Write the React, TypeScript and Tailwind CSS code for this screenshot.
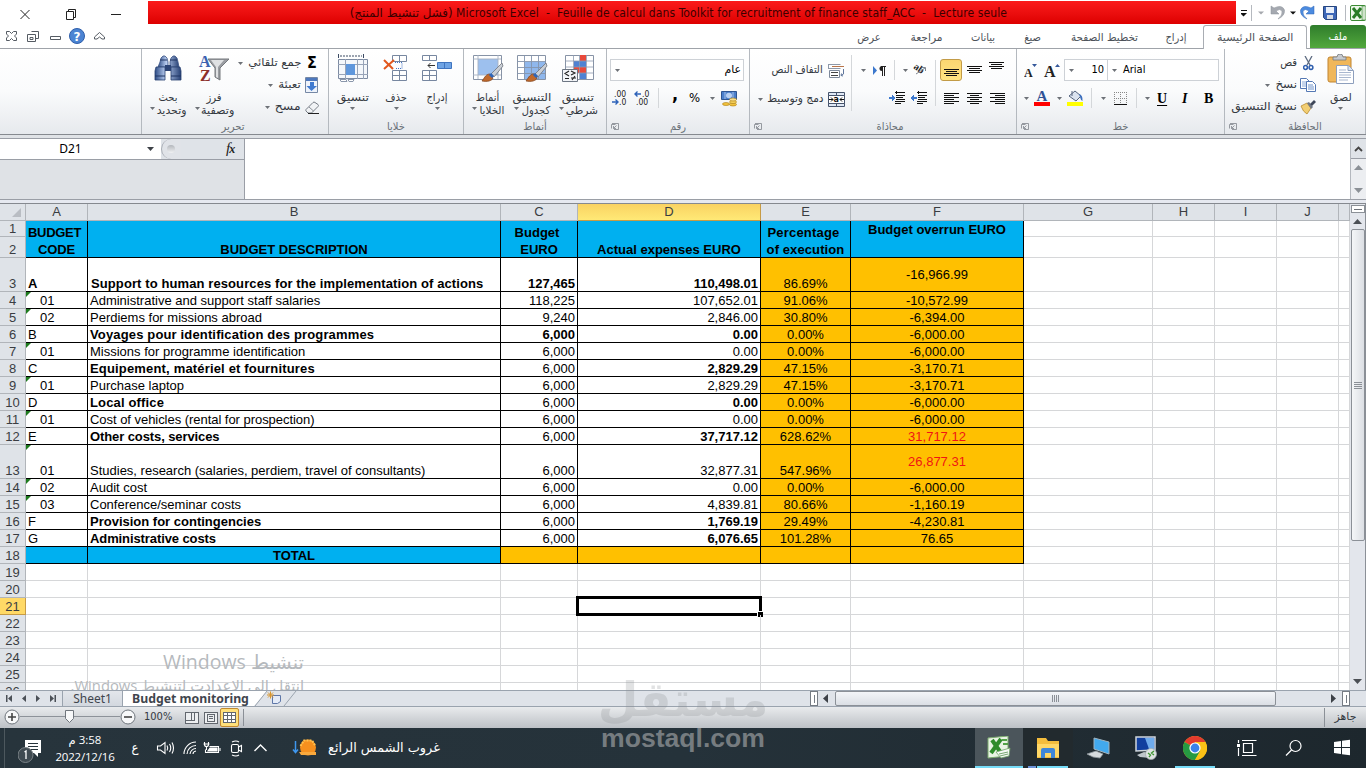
import React from 'react'
import clsx from 'clsx'

type RowData = {
  n: number
  code: string
  desc: string
  budget: string
  actual: string
  pct: string
  over: string
  bold?: boolean
  boldBudget?: boolean
  red?: boolean
  tracking?: string
}

const rows: RowData[] = [
  { n: 3, code: 'A', desc: 'Support to human resources for the implementation of actions', budget: '127,465', actual: '110,498.01', pct: '86.69%', over: '-16,966.99', bold: true, boldBudget: true, tracking: 'tracking-[0.1px]' },
  { n: 4, code: '01', desc: 'Administrative and support staff salaries', budget: '118,225', actual: '107,652.01', pct: '91.06%', over: '-10,572.99' },
  { n: 5, code: '02', desc: 'Perdiems for missions abroad', budget: '9,240', actual: '2,846.00', pct: '30.80%', over: '-6,394.00' },
  { n: 6, code: 'B', desc: 'Voyages pour identification des programmes', budget: '6,000', actual: '0.00', pct: '0.00%', over: '-6,000.00', bold: true, boldBudget: true, tracking: 'tracking-[0.15px]' },
  { n: 7, code: '01', desc: 'Missions for programme identification', budget: '6,000', actual: '0.00', pct: '0.00%', over: '-6,000.00' },
  { n: 8, code: 'C', desc: 'Equipement, matériel et fournitures', budget: '6,000', actual: '2,829.29', pct: '47.15%', over: '-3,170.71', bold: true, tracking: 'tracking-[0.17px]' },
  { n: 9, code: '01', desc: 'Purchase laptop', budget: '6,000', actual: '2,829.29', pct: '47.15%', over: '-3,170.71' },
  { n: 10, code: 'D', desc: 'Local office', budget: '6,000', actual: '0.00', pct: '0.00%', over: '-6,000.00', bold: true, tracking: 'tracking-[0.15px]' },
  { n: 11, code: '01', desc: 'Cost of vehicles (rental for prospection)', budget: '6,000', actual: '0.00', pct: '0.00%', over: '-6,000.00', tracking: 'tracking-[-0.04px]' },
  { n: 12, code: 'E', desc: 'Other costs, services', budget: '6,000', actual: '37,717.12', pct: '628.62%', over: '31,717.12', bold: true, red: true, tracking: 'tracking-[-0.1px]' },
  { n: 13, code: '01', desc: 'Studies, research (salaries, perdiem, travel of consultants)', budget: '6,000', actual: '32,877.31', pct: '547.96%', over: '26,877.31', red: true },
  { n: 14, code: '02', desc: 'Audit cost', budget: '6,000', actual: '0.00', pct: '0.00%', over: '-6,000.00' },
  { n: 15, code: '03', desc: 'Conference/seminar costs', budget: '6,000', actual: '4,839.81', pct: '80.66%', over: '-1,160.19' },
  { n: 16, code: 'F', desc: 'Provision for contingencies', budget: '6,000', actual: '1,769.19', pct: '29.49%', over: '-4,230.81', bold: true },
  { n: 17, code: 'G', desc: 'Administrative costs', budget: '6,000', actual: '6,076.65', pct: '101.28%', over: '76.65', bold: true, tracking: 'tracking-[-0.1px]' },
]

const columns = ['A', 'B', 'C', 'D', 'E', 'F', 'G', 'H', 'I', 'J', '']

const emptyRows = [19, 20, 21, 22, 23, 24, 25, 26]

/* ---------- small shared bits ---------- */

const Arrow = ({ className = '' }: { className?: string }) => (
  <svg className={clsx('shrink-0', className)} width="5" height="3" viewBox="0 0 5 3">
    <path d="M0 0h5L2.5 3z" fill="#6d7177" />
  </svg>
)

const Sep = ({ className = '' }: { className?: string }) => (
  <div className={clsx('w-px shrink-0 bg-[#d4d7da]', className)} />
)

const Launcher = () => (
  <svg className="absolute bottom-[4px] left-[4px]" width="8" height="7" viewBox="0 0 8 7" fill="none" stroke="#8b9096">
    <path d="M1 .5h6.500v6M7.500 6.500H3M4.500 1.500h-4v4M5.500 2.500l-3 3M2.500 3v2.500h2.500" strokeWidth=".9" />
  </svg>
)

const Lines = ({ widths, y = 0 }: { widths: number[][]; y?: number }) => (
  <svg className="shrink-0" width="15" height="16" viewBox="0 0 15 16" stroke="#111" strokeWidth="1" shapeRendering="crispEdges">
    {widths.map(([x1, x2], i) => (
      <path key={i} d={`M${x1} ${y + i * 2 + 0.5}H${x2}`} />
    ))}
  </svg>
)

type GroupProps = { width: string; label: string; launcher?: boolean; labelPad?: string; children: React.ReactNode }

const Group = ({ width, label, launcher, labelPad = '', children }: GroupProps) => (
  <div className={clsx('relative flex h-[85px] shrink-0 flex-col border-r border-[#b4b9bf]', width)}>
    <div className="flex h-[70px]">{children}</div>
    <div className={clsx('h-[15px] text-center text-[11px] leading-[15px] text-[#6a7178]', labelPad)} dir="rtl">{label}</div>
    {launcher && <Launcher />}
  </div>
)

type BigProps = { width: string; icon: React.ReactNode; line1: string; line2?: string; class1?: string; class2?: string }

const BigButton = ({ width, icon, line1, line2, class1 = '', class2 = '' }: BigProps) => (
  <div className={clsx('flex shrink-0 flex-col items-center pt-[5px]', width)}>
    <div className="h-[37px]">{icon}</div>
    <div className={clsx('h-[13px] whitespace-nowrap text-[11px] leading-[13px]', class1)} dir="rtl">{line1}</div>
    {line2 ? (
      <div className="flex h-[13px] items-center gap-[3px] whitespace-nowrap text-[11px] leading-[13px]">
        <Arrow className="-mt-1" />
        <span className={class2} dir="rtl">{line2}</span>
      </div>
    ) : (
      <Arrow className="mt-[3px]" />
    )}
  </div>
)

type SmallProps = { text: string; icon: React.ReactNode; arrow?: boolean; textClass?: string }

const SmallButton = ({ text, icon, arrow, textClass = '' }: SmallProps) => (
  <div className="flex h-[22px] items-center justify-end">
    {arrow && <Arrow className="mr-[5px]" />}
    <span className={clsx('origin-right whitespace-nowrap text-[11px]', textClass)} dir="rtl">{text}</span>
    <span className="ml-[3px] flex w-4 justify-center">{icon}</span>
  </div>
)

/* ---------- ribbon icons ---------- */

const Binoculars = () => (
  <svg width="28" height="28" viewBox="0 0 28 28">
    <defs>
      <linearGradient id="bino" x1="0" x2="1">
        <stop offset="0" stopColor="#2d4c86" />
        <stop offset=".4" stopColor="#b9cdf0" />
        <stop offset="1" stopColor="#274175" />
      </linearGradient>
    </defs>
    <path d="M6 8l1-4 2-2h2l2 2 1 4v5H4zM16 8l1-4 2-2h2l2 2 1 4 1 5h-9z" fill="url(#bino)" stroke="#3b5486" strokeWidth=".8" />
    <path d="M2 13h9v13H1V17zM17 13h9l1 4v9H17z" fill="url(#bino)" stroke="#263f70" strokeWidth=".8" />
    <path d="M11 11h6v6h-6z" fill="#2c4476" />
    <path d="M6 6h7M16 6h7M1 22h10M17 22h10" stroke="#1f3562" />
  </svg>
)

const SortFilter = () => (
  <svg width="32" height="32" viewBox="0 0 32 32">
    <path d="M10 5h21l-9 9v12l-5-3V14z" fill="#9a9da2" stroke="#74787d" />
    <path d="M13 6h13l-6 7v11l-2-1V13z" fill="#dfe1e3" />
    <text x="1" y="13" fontFamily="Liberation Serif, serif" fontWeight="700" fontSize="16" fill="#3b62b0">A</text>
    <text x="2" y="27" fontFamily="Liberation Serif, serif" fontWeight="700" fontSize="16" fill="#8c2f2b">Z</text>
  </svg>
)

const FormatCells = () => (
  <svg width="32" height="31" viewBox="0 0 32 31" fill="none">
    <path d="M1.500 0v4M26.500 0v4" stroke="#3b4a63" />
    <path d="M3 2h22" stroke="#3b4a63" strokeDasharray="2 1" />
    <path d="M1.500 5.500h29v19h-29z" fill="#f4f7fb" stroke="#7d8ba2" />
    <path d="M1 10.500h30M1 20.500h30M8.500 5v20M20.500 5v20M26.500 5v20" stroke="#98a4b8" />
    <path d="M9 10h9v11H9z" fill="#5f97dc" />
    <path d="M3 25.500h6l1 2H4zM11 25.500h6l-1 2h-4z" fill="#fff" stroke="#8a97ab" />
  </svg>
)

const DeleteCells = () => (
  <svg width="26" height="30" viewBox="0 0 26 30" fill="none" strokeWidth="1">
    <path d="M9.500 1.500h14v6h-14zM16.500 1.500v6M9.500 16.500h14v10h-14zM16.500 16.500v10M9.500 21.500h14" fill="#fff" stroke="#7787a0" />
    <path d="M12 8.500h7v6h-7" stroke="#4474c4" strokeDasharray="1 1" />
    <path d="M1 6l9 9M11 6L1 15" stroke="#e2571d" strokeWidth="2" />
  </svg>
)

const InsertCells = () => (
  <svg width="32" height="30" viewBox="0 0 32 30" fill="none" strokeWidth="1">
    <path d="M1.500 1.500h14v5h-14zM8.500 1.500v5M1.500 16.500h14v10h-14zM8.500 16.500v10M1.500 21.500h14" fill="#fff" stroke="#7787a0" />
    <path d="M16.500 8.500h14v6h-14z" fill="#6ea3e4" stroke="#3f74bf" />
    <path d="M23.500 8v7" stroke="#3f74bf" />
    <path d="M14 11.500H7M9.500 9L7 11.500 9.500 14" stroke="#333" />
  </svg>
)

const Brush = () => (
  <g>
    <path d="M30 9L19 20l3 3 9-11z" fill="#c9ced5" stroke="#6e747c" strokeWidth=".8" />
    <path d="M18 20c-4 0-5 3-8 7 5 1 10 0 11-3z" fill="#c0692c" stroke="#7c3f18" strokeWidth=".7" />
    <path d="M18 20l3 3" stroke="#2f66b8" strokeWidth="3" />
  </g>
)

const CellStyles = () => (
  <svg width="32" height="30" viewBox="0 0 32 30">
    <path d="M1.500 1.500h28v24h-28z" fill="#fff" stroke="#8793a6" />
    <path d="M6 5h20v16H6z" fill="#9dc0ee" />
    <path d="M6 1v24M1 5h28M1 21h28M26 1v24" stroke="#a6b1c2" strokeWidth=".9" />
    <Brush />
  </svg>
)

const TableStyles = () => (
  <svg width="32" height="30" viewBox="0 0 32 30">
    <path d="M1.500 1.500h28v24h-28z" fill="#fff" stroke="#8793a6" />
    <path d="M8 8h21v17H8z" fill="#8fb7ec" />
    <path d="M8.500 1v24M15.500 1v24M22.500 1v24M1 7.500h28M1 13.500h28M1 19.500h28" stroke="#8494ad" strokeWidth=".9" />
    <Brush />
  </svg>
)

const CondFormat = () => (
  <svg width="32" height="30" viewBox="0 0 32 30">
    <path d="M3.500 1.500h28v24h-28z" fill="#fff" stroke="#8793a6" />
    <path d="M18 1h6v6h-6zM12 13h12v6H12z" fill="#e8493b" />
    <path d="M12 7h12v6H12zM18 19h6v6h-6z" fill="#4f82d3" />
    <path d="M11.500 1v24M17.500 1v24M24.500 1v24M4 7h27M4 13h27M4 19h27" stroke="#8e9bb0" strokeWidth=".8" />
    <path d="M.5 15.500h15v12H.5z" fill="#f3f5f8" stroke="#6d7683" />
    <path d="M7 17l-4 2.500L7 22M3 24.500h4M9 17l4 2-4 2M9 24h5M10 26l3-4" stroke="#222" fill="none" strokeWidth="1.100" />
  </svg>
)

const Fill = () => (
  <svg width="14" height="16" viewBox="0 0 14 16">
    <path d="M.5.500h12v15H.5z" fill="#eef3fb" stroke="#7688a5" />
    <path d="M1 1h11v3H1z" fill="#4d78bd" />
    <path d="M5 5h4v4h3l-5.500 5L1.500 9H5z" fill="#3f7ad0" />
  </svg>
)

const Eraser = () => (
  <svg width="15" height="13" viewBox="0 0 15 13">
    <path d="M1 8.500L8 1.500q1-1 2 0l3 2q1 1 0 2L6.500 12H3L1 10q-.500-1 0-1.500z" fill="#f1f3f5" stroke="#777d86" />
    <path d="M4 6l4.500 4" stroke="#8a9098" />
    <path d="M3 12.500h11" stroke="#222" />
  </svg>
)

const Currency = () => (
  <svg width="17" height="17" viewBox="0 0 17 17">
    <path d="M.5 1.500h15v8H.5z" fill="#4b7fcb" stroke="#2f5592" />
    <ellipse cx="8" cy="5.500" rx="3" ry="2.800" fill="#b9d0f1" />
    <path d="M4 2v7M12 2v7" stroke="#a6c1e9" />
    <ellipse cx="5" cy="14" rx="3.500" ry="1.500" fill="#f2c23c" stroke="#a87b12" strokeWidth=".6" />
    <ellipse cx="12" cy="14.500" rx="3.500" ry="1.500" fill="#f2c23c" stroke="#a87b12" strokeWidth=".6" />
    <ellipse cx="12" cy="12" rx="3.500" ry="1.500" fill="#f7d35f" stroke="#a87b12" strokeWidth=".6" />
    <ellipse cx="12" cy="9.500" rx="3.500" ry="1.500" fill="#fae08a" stroke="#a87b12" strokeWidth=".6" />
  </svg>
)

const Decimals = ({ add }: { add?: boolean }) => (
  <svg width="17" height="16" viewBox="0 0 17 16">
    <text x={add ? 8 : 2} y="7" fontSize="8.500" fontFamily="DejaVu Sans Condensed, sans-serif" fill="#222">{add ? '.0' : '.00'}</text>
    <text x={add ? 2 : 7} y="14.500" fontSize="8.500" fontFamily="DejaVu Sans Condensed, sans-serif" fill="#222">{add ? '.00' : '.0'}</text>
    <path d={add ? 'M7 4H1M3.500 1.500L1 4l2.500 2.500' : 'M0 12h6M3.500 9.500L6 12l-2.500 2.500'} stroke="#2d62b8" fill="none" strokeWidth="1.400" />
  </svg>
)

const WrapText = () => (
  <svg className="shrink-0" width="17" height="16" viewBox="0 0 17 16" fill="none">
    <path d="M.5 1.500h12M.5 5.500h12M.5 1v5" stroke="#8d98a8" />
    <path d="M1.500 7.500h10v7h-10z" stroke="#7d899b" fill="#fff" />
    <path d="M3 9.500h7M3 12.500h7" stroke="#444" />
    <path d="M4 3.500h12" stroke="#b8754a" />
    <path d="M15.500 6v5l-2.500 1.500M15 13l-2-.5.5-2" stroke="#60779d" />
  </svg>
)

const Merge = () => (
  <svg className="shrink-0" width="17" height="15" viewBox="0 0 17 15" fill="none">
    <path d="M.5.500h16v14H.5z" fill="#dfe8f5" stroke="#45536b" />
    <path d="M8.500 0v4M8.500 11v4" stroke="#45536b" />
    <path d="M.5 3.500h16v8H.5z" stroke="#45536b" fill="#fff" />
    <path d="M1 7.500h4M3 5.500l2 2-2 2M16 7.500h-4M14 5.500l-2 2 2 2" stroke="#111" />
    <text x="5.600" y="10" fontSize="8" fontWeight="700" fontFamily="DejaVu Sans, sans-serif" fill="#111">a</text>
  </svg>
)

const Indent = ({ right }: { right?: boolean }) => (
  <svg width="16" height="14" viewBox="0 0 16 14" shapeRendering="crispEdges">
    <path d="M6 1.500h10M8 4.500h8M8 6.500h6M8 8.500h8M6 10.500h10M6 12.500h6" stroke="#111" />
    <path d="M7.500 0v14" stroke="#111" strokeDasharray="1 1" />
    <path d={right ? 'M0 6h3V3.500L6 7l-3 3.500V8H0z' : 'M6 6H3V3.500L0 7l3 3.500V8h3z'} fill="#3c78cd" />
  </svg>
)

const Paste = () => (
  <svg width="28" height="31" viewBox="0 0 28 31">
    <rect x="1" y="3" width="23" height="25" rx="2" fill="#f0b75a" stroke="#c08431" />
    <path d="M6 5V3h4q0-3 3-3t3 3h3v3H6z" fill="#c5c9ce" stroke="#74787d" strokeWidth=".8" />
    <path d="M9.500 11.500h12l5 5v13h-17z" fill="#fff" stroke="#8d9fbd" />
    <path d="M12 16h7M12 18.500h12M12 21h12M12 23.500h12M12 26h9" stroke="#a9b7cf" />
    <path d="M21 11.500v5h5" fill="#dbe5f4" stroke="#8d9fbd" />
  </svg>
)

const Scissors = () => (
  <svg width="11" height="15" viewBox="0 0 11 15" fill="none">
    <path d="M2 0l5 9M9 0L4 9" stroke="#5d6b80" strokeWidth="1.300" />
    <circle cx="2.500" cy="11.500" r="1.900" stroke="#2f5fae" strokeWidth="1.500" />
    <circle cx="8" cy="11.500" r="1.900" stroke="#2f5fae" strokeWidth="1.500" />
  </svg>
)

const Copy = () => (
  <svg width="16" height="14" viewBox="0 0 16 14">
    <path d="M.5.500h6l3 3v7h-9z" fill="#fff" stroke="#5478b4" />
    <path d="M2 4h5M2 6h5M2 8h4" stroke="#8dabd9" />
    <path d="M6.500 3.500h6l3 3v7h-9z" fill="#fff" stroke="#5478b4" />
    <path d="M8 7h5M8 9h6M8 11h6" stroke="#6f93cb" />
  </svg>
)

const FormatPainter = () => (
  <svg width="16" height="15" viewBox="0 0 16 15">
    <path d="M1 6l6-3 4 5-4 6Q3 12 1 6z" fill="#f2ce72" stroke="#b98c31" strokeWidth=".8" />
    <path d="M7 3l2-1 4 5-2 2z" fill="#717781" />
    <path d="M10 4l4-4 2 2-4 4z" fill="#3d4658" />
  </svg>
)

const Bucket = () => (
  <svg width="17" height="17" viewBox="0 0 17 17">
    <path d="M2 6l6-5 6 5-5 5z" fill="#dbe3ef" stroke="#56657f" />
    <path d="M5 1v5" stroke="#56657f" />
    <path d="M12 4q4 1 3.500 7-2-1-2.500-4z" fill="#3d6fbd" />
    <path d="M0 12h16v4H0z" fill="#ffff00" />
  </svg>
)

/* ---------- window chrome ---------- */

const TitleBar = () => (
  <div className="flex h-[25px] bg-white pt-px">
    <div className="flex w-[148px] items-start pl-[20px] pt-[8px]">
      <svg width="102" height="12" viewBox="0 0 102 12" fill="none" stroke="#222">
        <path d="M.5 1l9 9M9.500 1l-9 9" />
        <path d="M46.500 2.500h7v8h-7zM48.500 2.500v-2h7v8h-2" />
        <path d="M91 5.500h10" />
      </svg>
    </div>
    <div className="flex h-[23px] w-[1088px] items-center justify-center bg-gradient-to-b from-[#fb1a1a] to-[#dd0000]">
      <div className="mr-[18px] flex whitespace-pre font-['DejaVu_Sans_Condensed',sans-serif] text-[12px] text-[#3c0000]">
        <span className="origin-right scale-x-[1.1]" dir="rtl">(فشل تنشيط المنتج)</span>
        <span className="tracking-[0.11px]"> Microsoft Excel  -  Feuille de calcul dans Toolkit for recruitment of finance staff_ACC  -  Lecture seule</span>
      </div>
    </div>
    <div className="flex flex-1 items-center gap-[5px] pl-[5px]">
      <svg width="125" height="20" viewBox="0 0 125 20" fill="none">
        <path d="M-1 7.500h7" stroke="#111" />
        <path d="M-1 10h7l-3.500 3.500z" fill="#111" />
        <path d="M10.500 2v16M104.500 2v16" stroke="#b5b9bf" />
        <path d="M17 8.500h6l-3 3z" fill="#a5a8ad" />
        <path d="M30 3v8h8l-3-3q4-3 6 0 1 4-4 8 7-3 6.500-9-2.500-6-10.500-2z" fill="#a5a9b0" stroke="#8b9098" strokeWidth=".5" />
        <path d="M49 8.500h6l-3 3z" fill="#111" />
        <path d="M73 3v8h-8l3-3q-4-3-6 0-1 4 4 8-7-3-6.500-9 2.500-6 10.500-2z" fill="#4b8be0" stroke="#2b62b4" strokeWidth=".5" />
        <path d="M82.500 3.500h13v13h-11l-2-2z" fill="#3e68b8" stroke="#27467f" />
        <path d="M85 4h8v6h-8z" fill="#e9f0fb" />
        <path d="M86 12h6v4h-6z" fill="#d5dbe5" />
        <rect x="109.500" y="2.500" width="15" height="15" rx="1.500" fill="#edf7ea" stroke="#3b8a33" />
        <path d="M112 5l8 10M120 5l-8 10" stroke="#2a7c26" strokeWidth="3" />
        <path d="M121 3h4v14h-4z" fill="#cfe3ca" stroke="#3b8a33" strokeWidth=".6" />
      </svg>
    </div>
  </div>
)

const TabRow = () => (
  <div className="flex h-[24px] items-end border-b border-[#9fa3a9] bg-white text-[11px] leading-[20px] text-[#4c5259]">
    <svg className="mb-[3px] ml-[5px] shrink-0" width="102" height="17" viewBox="0 0 102 17" fill="none" stroke="#555b63">
      <path d="M1.500 3.500h3l2 2 2-2h3v2.500l-2 2 2 2v2.500h-3l-2-2-2 2h-3v-2.500l2-2-2-2z" />
      <path d="M26.500 3.500h7v7h-3M22.500 6.500h8v7h-8zM25 9.500h3v2h-3z" />
      <path d="M45.500 8.500h10v3h-10z" />
      <circle cx="72" cy="8" r="7.500" fill="#4b84d3" stroke="#2f5eaa" />
      <path d="M89.500 9l5-4.500 5 4.500v2h-2.500L94.500 9l-2.500 2h-2.500z" />
      <text x="72" y="12.500" textAnchor="middle" fontSize="12" fontWeight="700" fill="#fff" stroke="none" fontFamily="DejaVu Sans, sans-serif">?</text>
    </svg>
    <div className="flex-1" />
    <div className="flex whitespace-nowrap text-center">
      <span className="w-[32px]">عرض</span>
      <span className="w-[83px] scale-x-[1.08]">مراجعة</span>
      <span className="w-[30px]">بيانات</span>
      <span className="w-[69px]">صيغ</span>
      <span className="w-[75px] scale-x-[1.05]">تخطيط الصفحة</span>
      <span className="w-[60px] pl-2">إدراج</span>
    </div>
    <div className="relative top-px ml-[1px] h-[24px] w-[104px] rounded-t-[3px] border border-b-0 border-[#a9adb3] bg-white text-center leading-[24px] whitespace-nowrap">
      <span className="inline-block scale-x-[1.12]">الصفحة الرئيسية</span>
    </div>
    <div className="ml-[3px] h-[23px] w-[56px] rounded-t-[3px] bg-gradient-to-b from-[#2f7d2c] to-[#52a83c] text-center leading-[24px] text-white">ملف</div>
  </div>
)

const Ribbon = () => (
  <div className="flex h-[85px] bg-gradient-to-b from-white via-[#fafbfc] to-[#e6e9ed] text-[#33383f]">
    <div className="w-[142px] shrink-0 border-r border-[#b4b9bf]" />

    <Group width="w-[187px]" label="تحرير" labelPad="pr-1">
      <BigButton width="w-[52px]" icon={<Binoculars />} line1="بحث" line2="وتحديد" class2="scale-x-[1.1]" />
      <BigButton width="w-[40px]" icon={<SortFilter />} line1="فرز" line2="وتصفية" class2="scale-x-[1.13]" />
      <div className="flex w-[86px] flex-col pt-[3px]">
        <SmallButton arrow text="جمع تلقائي" textClass="ml-[8px] scale-x-[1.17]" icon={<span className="text-[16px] font-bold leading-none text-black">Σ</span>} />
        <SmallButton arrow text="تعبئة" textClass="ml-[4px] scale-x-[1.2]" icon={<Fill />} />
        <SmallButton arrow text="مسح" textClass="ml-[5px] scale-x-[1.25]" icon={<Eraser />} />
      </div>
    </Group>

    <Group width="w-[135px]" label="خلايا">
      <BigButton width="w-[47px]" icon={<FormatCells />} line1="تنسيق" class1="scale-x-[1.25]" />
      <BigButton width="w-[40px]" icon={<DeleteCells />} line1="حذف" />
      <BigButton width="w-[42px]" icon={<InsertCells />} line1="إدراج" />
    </Group>

    <Group width="w-[143px]" label="أنماط">
      <BigButton width="w-[47px]" icon={<CellStyles />} line1="أنماط" line2="الخلايا" class2="scale-x-[1.05]" />
      <BigButton width="w-[42px]" icon={<TableStyles />} line1="التنسيق" line2="كجدول" class1="scale-x-[1.22]" />
      <BigButton width="w-[50px]" icon={<CondFormat />} line1="تنسيق" line2="شرطي" class1="scale-x-[1.25]" class2="scale-x-[1.08]" />
    </Group>

    <Group width="w-[143px]" label="رقم" launcher labelPad="pl-0 pr-0">
      <div className="flex flex-col pl-[3px] pt-[10px]">
        <div className="flex h-[22px] w-[134px] items-center justify-between border border-[#cdd1d6] bg-white pl-[4px] pr-[2px]">
          <Arrow />
          <span className="origin-right scale-x-[1.1] text-[11px] text-black">عام</span>
        </div>
        <div className="mt-[6px] flex h-[22px] items-center pl-[2px]">
          <Decimals />
          <span className="ml-[5px]"><Decimals add /></span>
          <Sep className="ml-[7px] h-[20px]" />
          <span className="ml-[13px] w-[6px] text-[18px] font-bold leading-none -mt-2 text-black">,</span>
          <span className="ml-[11px] text-[13px] text-black">%</span>
          <Arrow className="ml-[10px]" />
          <span className="ml-[6px]"><Currency /></span>
        </div>
      </div>
    </Group>

    <Group width="w-[267px]" label="محاذاة" launcher labelPad="pl-[14px] pr-0">
      <div className="flex w-[101px] flex-col pt-[10px]">
        <div className="flex h-[23px] items-center justify-end pr-[6px]">
          <span className="mr-[5px] text-[11px] whitespace-nowrap" dir="rtl">التفاف النص</span>
          <WrapText />
        </div>
        <div className="mt-[6px] flex h-[22px] items-center justify-end pr-[6px]">
          <Arrow className="mr-[8px]" />
          <span className="mr-[4px] origin-right scale-x-[1.07] text-[11px] whitespace-nowrap" dir="rtl">دمج وتوسيط</span>
          <Merge />
        </div>
      </div>
      <Sep className="mt-[6px] h-[56px]" />
      <div className="flex w-[84px] flex-col pt-[10px]">
        <div className="flex h-[22px] items-center pl-[9px]">
          <Arrow />
          <svg className="ml-[7px]" width="14" height="11" viewBox="0 0 14 11">
            <path d="M0 1v9l4-4.500z" fill="#3c78cd" />
            <path d="M8 1.500h5M9.500 1v10M11.500 1v10" stroke="#222" />
            <path d="M9 1a2.500 2.500 0 000 5z" fill="#222" />
          </svg>
          <Sep className="ml-[7px] h-[20px]" />
          <Arrow className="ml-[8px]" />
          <svg className="ml-[2px]" width="18" height="18" viewBox="0 0 18 18">
            <text x="3" y="9" fontSize="10" fontWeight="700" fontFamily="Liberation Serif, serif" fill="#222" transform="rotate(35 6 8)">ab</text>
            <path d="M6 13l9-6M12 6.500h3.500V10" stroke="#7d8590" fill="none" />
          </svg>
        </div>
        <div className="mt-[6px] flex h-[22px] items-center gap-[6px] pl-[37px]">
          <Indent right />
          <Indent />
        </div>
      </div>
      <Sep className="mt-[11px] h-[46px]" />
      <div className="flex w-[80px] flex-col pt-[10px]">
        <div className="flex h-[22px] items-center pl-[4px]">
          <div className="flex h-[22px] w-[22px] items-center justify-center rounded-[3px] border border-[#c29b47] bg-gradient-to-b from-[#fbd671] to-[#ffe482]">
            <Lines y={7} widths={[[0, 15], [2, 13], [0, 15], [2, 13]]} />
          </div>
          <span className="ml-[5px]"><Lines y={4} widths={[[0, 15], [2, 13], [0, 15], [2, 13]]} /></span>
          <span className="ml-[7px]"><Lines y={0} widths={[[0, 15], [2, 13], [0, 15], [2, 13]]} /></span>
        </div>
        <div className="mt-[9px] flex h-[22px] items-center gap-[8px] pl-[8px]">
          <Lines y={0} widths={[[0, 15], [0, 10], [0, 15], [0, 10], [0, 15], [0, 10]]} />
          <Lines y={0} widths={[[0, 15], [3, 12], [0, 15], [3, 12], [0, 15], [3, 12]]} />
          <Lines y={0} widths={[[0, 15], [5, 15], [0, 15], [5, 15], [0, 15], [5, 15]]} />
        </div>
      </div>
    </Group>

    <Group width="w-[208px]" label="خط" launcher labelPad="pl-0 pr-0">
      <div className="flex flex-col pl-[7px] pt-[10px]">
        <div className="flex h-[22px] items-center">
          <svg width="36" height="22" viewBox="0 0 36 22">
            <text x="0" y="18" fontSize="12" fontWeight="700" fontFamily="Liberation Serif, serif" fill="#222">A</text>
            <text x="20" y="18" fontSize="16" fontWeight="700" fontFamily="Liberation Serif, serif" fill="#222">A</text>
            <path d="M8 5h5l-2.500 3zM31 8h5l-2.500-3z" fill="#35589b" />
          </svg>
          <div className="ml-[4px] flex h-[22px] w-[44px] items-center justify-between border border-[#cdd1d6] bg-white pl-[4px] pr-[3px] font-['DejaVu_Sans_Condensed'] text-[11px] text-black">
            <Arrow />10
          </div>
          <div className="-ml-px flex h-[22px] w-[112px] items-center gap-[6px] border border-[#cdd1d6] bg-white pl-[4px] font-['DejaVu_Sans_Condensed'] text-[11px] text-black">
            <Arrow />Arial
          </div>
        </div>
        <div className="mt-[6px] flex h-[22px] items-center">
          <Arrow />
          <svg className="ml-[5px]" width="16" height="20" viewBox="0 0 16 20">
            <text x="2.500" y="13" fontSize="15" fontWeight="700" fontFamily="Liberation Serif, serif" fill="#2f5296">A</text>
            <path d="M0 14h16v4H0z" fill="#ff0000" />
          </svg>
          <Arrow className="ml-[7px]" />
          <span className="ml-[5px]"><Bucket /></span>
          <Sep className="ml-[7px] h-[20px]" />
          <Arrow className="ml-[9px]" />
          <svg className="ml-[8px]" width="13" height="13" viewBox="0 0 13 13" shapeRendering="crispEdges">
            <path d="M.5 0v12M6.500 0v12M12.500 0v12M0 .5h13M0 6.500h13" stroke="#888" strokeDasharray="1 1" />
            <path d="M0 12.500h13" stroke="#111" />
          </svg>
          <Sep className="ml-[9px] h-[20px]" />
          <Arrow className="ml-[8px]" />
          <div className="flex items-center font-['Liberation_Serif',serif] text-[14px] font-bold text-black">
            <span className="ml-[7px] w-[11px] underline underline-offset-2">U</span>
            <span className="ml-[14px] w-[8px] italic">I</span>
            <span className="ml-[14px]">B</span>
          </div>
        </div>
      </div>
    </Group>

    <Group width="w-[141px]" label="الحافظة" launcher labelPad="pl-5">
      <div className="flex w-[92px] flex-col pt-[3px]">
        <SmallButton text="قص" icon={<Scissors />} />
        <SmallButton arrow text="نسخ" textClass="ml-[4px] scale-x-[1.2]" icon={<Copy />} />
        <SmallButton text="نسخ التنسيق" textClass="scale-x-[1.24]" icon={<FormatPainter />} />
      </div>
      <BigButton width="w-[49px]" icon={<Paste />} line1="لصق" class1="scale-x-[1.1]" />
    </Group>
  </div>
)

const FormulaBar = () => (
  <div className="flex h-[66px] flex-col border-t border-[#85898f] bg-[#dfe2e6] pt-[3px]">
    <div className="flex h-[62px] border-y border-[#9a9ea6]">
      <div className="flex w-[245px] flex-col border-r border-[#9a9ea6]">
        <div className="flex h-[21px] border-b border-[#9a9ea6] bg-[#dfe3e8]">
          <div className="flex w-[161px] items-center bg-white">
            <span className="w-[141px] text-center font-['Noto_Sans',sans-serif] text-[12px] text-black">D21</span>
            <svg className="ml-[6px]" width="7" height="4" viewBox="0 0 7 4"><path d="M0 0h7L3.500 4z" fill="#3d4147" /></svg>
          </div>
          <div className="h-[20px] w-[20px] rounded-l-full border-l border-[#a9adb4] bg-[#e0e3e8]">
            <div className="ml-[5px] mt-[6px] h-[8px] w-[8px] rounded-full bg-gradient-to-b from-[#b3b7bc] to-[#f0f1f3]" />
          </div>
          <span className="ml-[45px] font-['Liberation_Serif',serif] text-[15px] italic leading-[19px] text-[#222]">f<span className="-ml-px text-[12px] font-bold">x</span></span>
        </div>
      </div>
      <div className="flex-1 bg-white" />
      <div className="flex w-[16px] flex-col items-center border-l border-[#b4b8be] bg-[#eceef1]">
        <div className="flex h-[20px] w-full items-center justify-center border-b border-[#9a9ea6] bg-[#dfe3e8]">
          <svg width="9" height="6" viewBox="0 0 9 6"><path d="M1 5l3.500-3.500L8 5" stroke="#444" strokeWidth="1.800" fill="none" /></svg>
        </div>
        <svg className="mt-[6px]" width="9" height="5" viewBox="0 0 9 5"><path d="M0 5h9L4.500 0z" fill="#8b9096" /></svg>
        <svg className="mt-[18px]" width="9" height="5" viewBox="0 0 9 5"><path d="M0 0h9L4.500 5z" fill="#8b9096" /></svg>
      </div>
    </div>
  </div>
)

/* ---------- sheet ---------- */

const headCell = 'flex flex-col items-center justify-end gap-[2px] border-b border-r border-black bg-[#00b0f0] row-span-2 font-bold leading-[15px] whitespace-nowrap'
const cell = 'relative flex items-end border-b border-r border-black leading-[14px] whitespace-nowrap'
const blank = 'border-b border-r border-[#d6d7d9]'
const rowHead = 'flex items-end justify-center border-b border-r border-[#b1b5ba] bg-[#dfe3e8] leading-[14px] text-[#3a3d42]'

const Blanks = ({ count }: { count: number }) => (
  <>
    {Array.from({ length: count }, (_, i) => (
      <div key={i} className={blank} />
    ))}
  </>
)

const SheetRow = ({ r }: { r: RowData }) => {
  const isSub = r.code.startsWith('0')
  return (
    <>
      <div className={rowHead}>{r.n}</div>
      <div className={clsx(cell, isSub ? 'pl-[14px]' : 'pl-[2px]', r.n === 3 && 'font-bold')}>
        {isSub && <span className="absolute left-0 top-0 border-r-[5px] border-t-[5px] border-r-transparent border-t-[#1e7b1e]" />}
        {r.code}
      </div>
      <div className={clsx(cell, r.n === 3 ? 'pl-[3px]' : 'pl-[2px]', r.bold && 'font-bold', r.tracking)}>{r.desc}</div>
      <div className={clsx(cell, 'justify-end pr-[2px]', r.boldBudget && 'font-bold')}>{r.budget}</div>
      <div className={clsx(cell, 'justify-end pr-[2px]', r.bold && 'font-bold')}>{r.actual}</div>
      <div className={clsx(cell, 'justify-center bg-[#ffc000]')}>{r.pct}</div>
      <div className={clsx('flex justify-center border-b border-r border-black bg-[#ffc000]', r.n === 3 || r.n === 13 ? 'items-center leading-[16px]' : 'items-end leading-[14px]', r.red && 'text-[#f01414]')}>{r.over}</div>
      <Blanks count={5} />
    </>
  )
}

const Sheet = () => (
  <div className="relative h-[486px] w-[1350px] overflow-hidden bg-white font-['Liberation_Sans',Arial,sans-serif] text-[13px] text-black">
    <div className="grid grid-cols-[26px_62px_413px_77px_183px_90px_173px_129px_62px_62px_62px_11px] grid-rows-[17px_16px_21px_34px_repeat(9,17px)_34px_repeat(13,17px)]">
      <div className="flex items-end justify-end border-b border-r border-[#b1b5ba] bg-[#dfe3e8] pb-[3px] pr-[4px]">
        <svg width="9" height="9" viewBox="0 0 9 9"><path d="M9 0v9H0z" fill="#b9bdc3" /></svg>
      </div>
      {columns.map((c, i) => (
        <div
          key={i}
          className={clsx(
            'flex items-center justify-center border-b border-r leading-[16px] text-[#3a3d42]',
            c === 'D' ? 'border-[#c79b45] bg-gradient-to-b from-[#f9d262] to-[#ffe976]' : 'border-[#b1b5ba] bg-[#dfe3e8]'
          )}
        >
          {c}
        </div>
      ))}

      <div className={rowHead}>1</div>
      <div className={headCell}><span className="-ml-1 tracking-[-0.3px]">BUDGET</span><span className="tracking-[-0.2px]">CODE</span></div>
      <div className={headCell}>BUDGET DESCRIPTION</div>
      <div className={headCell}><span className="-ml-1">Budget</span><span>EURO</span></div>
      <div className={headCell}>Actual expenses EURO</div>
      <div className={headCell}><span className="-ml-1 tracking-[0.2px]">Percentage</span><span className="tracking-[0.1px]">of execution</span></div>
      <div className="row-span-2 border-b border-r border-black bg-[#00b0f0] text-center font-bold leading-[17px]">Budget overrun EURO</div>
      <Blanks count={5} />
      <div className={rowHead}>2</div>
      <Blanks count={5} />

      {rows.map((r) => (
        <SheetRow key={r.n} r={r} />
      ))}

      <div className={rowHead}>18</div>
      <div className={clsx(cell, 'bg-[#00b0f0]')} />
      <div className={clsx(cell, 'justify-center bg-[#00b0f0] font-bold')}>TOTAL</div>
      <div className={clsx(cell, 'bg-[#ffc000]')} />
      <div className={clsx(cell, 'bg-[#ffc000]')} />
      <div className={clsx(cell, 'bg-[#ffc000]')} />
      <div className={clsx(cell, 'bg-[#ffc000]')} />
      <Blanks count={5} />

      {emptyRows.map((n) => (
        <React.Fragment key={n}>
          <div className={clsx(rowHead, n === 21 && 'border-[#c79b45]! bg-[#ffd966]!')}>{n}</div>
          <Blanks count={3} />
          <div className={clsx(blank, 'relative')}>
            {n === 21 && (
              <div className="absolute -left-[2px] -top-[2px] h-[20px] w-[186px] border-[3px] border-black">
                <span className="absolute -bottom-[4px] -right-[4px] h-[6px] w-[6px] border-l border-t border-white bg-black" />
              </div>
            )}
          </div>
          <Blanks count={7} />
        </React.Fragment>
      ))}
    </div>

    <div className="absolute right-[1046px] top-[446px] whitespace-nowrap text-right font-['Open_Sans','DejaVu_Sans',sans-serif] text-[#b5b9bd]" dir="rtl">
      <div className="text-[19.500px] leading-[24px]">تنشيط Windows</div>
      <div className="text-[14.800px] leading-[22px]">انتقل إلى الإعدادت لتنشيط Windows.</div>
    </div>
  </div>
)

const VScroll = () => (
  <div className="flex w-[16px] flex-col items-center border-r border-[#8b9097] bg-[#e3e6ec]">
    <div className="mt-px flex h-[8px] w-[14px] items-center justify-center border border-[#8b9097] bg-white">
      <div className="h-px w-[8px] bg-[#6c7178]" />
    </div>
    <svg className="mt-[6px]" width="9" height="5" viewBox="0 0 9 5"><path d="M0 5h9L4.500 0z" fill="#4b4f55" /></svg>
    <div className="mt-[5px] flex h-[312px] w-[14px] flex-col items-center justify-center gap-[1px] rounded-[2px] border border-[#8b9097] bg-gradient-to-r from-[#f4f6f8] to-[#dcdfe4]">
      <div className="h-px w-[8px] bg-[#8b9097]" />
      <div className="h-px w-[8px] bg-[#8b9097]" />
      <div className="h-px w-[8px] bg-[#8b9097]" />
      <div className="h-px w-[8px] bg-[#8b9097]" />
    </div>
    <div className="flex-1" />
    <svg className="mb-[6px]" width="9" height="5" viewBox="0 0 9 5"><path d="M0 0h9L4.500 5z" fill="#4b4f55" /></svg>
  </div>
)

const SheetTabs = () => (
  <div className="flex h-[17px] items-stretch border-y border-[#9aa3ae] bg-[#dfe3e9] text-[12px] leading-[15px] text-[#3f454d]">
    <svg width="62" height="15" viewBox="0 0 62 15" fill="#4b5057">
      <path d="M6 4h1.500v7H6zM12 4v7L8 7.500zM26 4v7l-4-3.500zM36 4v7l4-3.500zM50 4v7l4-3.500zM54.500 4H56v7h-1.500z" />
    </svg>
    <div className="w-[60px] border-l border-[#9aa3ae] bg-gradient-to-b from-[#e3e6eb] to-[#d3d8df] text-center font-['Noto_Sans',sans-serif]">Sheet1</div>
    <div className="w-[132px] whitespace-nowrap border-l border-[#9aa3ae] bg-white pl-[9px] font-['Noto_Sans',sans-serif] text-[12.300px] font-bold">Budget monitoring</div>
    <svg width="46" height="15" viewBox="0 0 46 15" fill="none">
      <path d="M0 0h13L0 15z" fill="#fff" />
      <path d="M13 0L1 15M42 0L30 15" stroke="#9aa3ae" />
      <path d="M18.500 4.500h8v6l-3 2h-5z" fill="#e4ebf7" stroke="#5e77a8" />
      <path d="M13 4h7M16.500.500v7M14 1.500l5 5M19 1.500l-5 5" stroke="#d9952b" />
    </svg>
    <div className="flex-1" />
    <div className="flex h-[15px] w-[8px] items-center justify-center border border-[#767c84] bg-white"><div className="h-[8px] w-px bg-[#767c84]" /></div>
    <svg width="17" height="15" viewBox="0 0 17 15"><path d="M10 3v9L5 7.500z" fill="#3d4147" /></svg>
    <div className="flex h-[15px] w-[441px] items-center justify-center gap-[1px] rounded-[2px] border border-[#8b9097] bg-gradient-to-b from-[#f3f5f8] to-[#dbdfe5]">
      <div className="h-[7px] w-px bg-[#8b9097]" />
      <div className="h-[7px] w-px bg-[#8b9097]" />
      <div className="h-[7px] w-px bg-[#8b9097]" />
      <div className="h-[7px] w-px bg-[#8b9097]" />
    </div>
    <svg width="66" height="15" viewBox="0 0 66 15"><path d="M55 3v9l5-4.500z" fill="#3d4147" /></svg>
    <div className="mr-[16px] flex h-[15px] w-[8px] items-center justify-center border border-[#767c84] bg-white"><div className="h-[8px] w-px bg-[#767c84]" /></div>
  </div>
)

const StatusBar = () => (
  <div className="flex h-[21px] items-center bg-gradient-to-b from-[#e9ebed] to-[#bdc1c6] text-[11px] text-[#33383f]">
    <svg width="140" height="21" viewBox="0 0 140 21" fill="none" stroke="#6f757c">
      <path d="M20 9.500h100" stroke="#8d9299" />
      <circle cx="12" cy="10" r="7" fill="#f7f8f9" />
      <path d="M8 10h8M12 6v8" stroke="#444" strokeWidth="1.600" />
      <path d="M65.500 3.500h8v8l-4 4-4-4z" fill="#f7f8f9" />
      <circle cx="128" cy="10" r="7" fill="#f7f8f9" />
      <path d="M124 10h8" stroke="#444" strokeWidth="1.600" />
    </svg>
    <span className="ml-[4px] w-[41px] font-['DejaVu_Sans_Condensed',sans-serif]">100%</span>
    <svg width="34" height="14" viewBox="0 0 34 14" fill="none" stroke="#62676e" shapeRendering="crispEdges">
      <path d="M.5 1.500h13v11H.5z" fill="#eceef0" />
      <path d="M1 9.500h5.500v-8M9.500 9.500v-8M6 9.500h4" />
      <path d="M19.500 1.500h13v11h-13zM22.500 3.500h7v7h-7z" fill="#eceef0" />
      <path d="M24 5.500h4M24 7.500h4" />
    </svg>
    <div className="ml-px flex h-[19px] w-[19px] items-center justify-center rounded-[2px] border border-[#c28a30] bg-[#ffe07a]">
      <svg width="13" height="11" viewBox="0 0 13 11" fill="#fff" stroke="#62676e" shapeRendering="crispEdges">
        <path d="M.5.500h12v10H.5zM4.500.500v10M8.500.500v10M.5 3.500h12M.5 7h12" />
      </svg>
    </div>
    <Sep className="ml-[4px] h-[17px] bg-[#8b9097]!" />
    <div className="flex-1" />
    <Sep className="h-[19px] bg-[#8b9097]!" />
    <span className="w-[41px] scale-x-[1.1] text-center">جاهز</span>
  </div>
)

/* ---------- windows taskbar ---------- */

const Chrome = () => (
  <svg width="24" height="24" viewBox="0 0 24 24">
    <circle cx="12" cy="12" r="12" fill="#fbc116" />
    <path d="M12 12L1.600 6A12 12 0 0122.400 6H12z" fill="#e33b2e" />
    <path d="M1.600 6A12 12 0 0012 24l5.200-9L12 12z" fill="#269a42" />
    <path d="M12 6h10.400A12 12 0 0112 24l5.200-9z" fill="#fbc116" />
    <circle cx="12" cy="12" r="5.600" fill="#fff" />
    <circle cx="12" cy="12" r="4.400" fill="#3b82ea" />
  </svg>
)

const Taskbar = () => (
  <div className="flex h-[40px] bg-gradient-to-r from-[#27343c] via-[#25323a] to-[#1d272d] text-white">
    <div className="ml-[4px] flex w-[440px] items-center border-l border-[#4d585e]">
      <svg className="ml-[13px] mt-[2px]" width="26" height="28" viewBox="0 0 26 28">
        <path d="M7 5h16v13h-3v4l-4-4H7z" fill="#fff" />
        <path d="M10 8.500h10M10 11.500h10M12 14.500h8" stroke="#27343c" />
        <circle cx="7.500" cy="20" r="7.500" fill="#3f4a51" stroke="#7b8388" />
        <path d="M6.500 17l1.500-1v8" stroke="#fff" strokeWidth="1.300" fill="none" />
      </svg>
      <div className="ml-[7px] flex w-[68px] flex-col items-center font-['Open_Sans','DejaVu_Sans',sans-serif] text-[11.500px] leading-[17px] tracking-[-0.200px]">
        <span dir="rtl">3:58 م</span>
        <span>2022/12/16</span>
      </div>
      <span className="ml-[10px] w-[12px] text-center text-[13px]">ع</span>
      <svg className="ml-[15px]" width="112" height="20" viewBox="0 0 112 20" fill="none" stroke="#fff" strokeWidth="1.100">
        <path d="M1.500 8h3L9 4.500v11L4.500 12h-3zM11 7.500q1.500 2.500 0 5M13.500 6q2.500 4 0 8M16 4.500q3 5.500 0 11" />
        <path d="M28 16A12 12 0 0140 4M31 16a9 9 0 019-8.500M34 16a6 6 0 016-5.500M37 16q0-2.500 3-3" strokeWidth="1.100" />
        <path d="M53.500 8.500h9v6h-13v-3M64 10v3" />
        <path d="M54 10h7v3h-9z" fill="#fff" />
        <path d="M48.500 4v2.500q0 2 2 2t2-2V4M50.500 9v3M47.500 6h6" />
        <rect x="75.500" y="6.500" width="7" height="8" rx="1.500" />
        <path d="M82.500 9l3-1.500v6l-3-1.500M76 4q4-2 7 0M76 17q4 2 7 0" />
        <path d="M98.500 13l6-6 6 6" strokeWidth="1.400" />
      </svg>
      <svg className="ml-[24px]" width="26" height="20" viewBox="0 0 26 20">
        <path d="M3.500 3v11M1 11.500l2.500 3 2.500-3" stroke="#3f97ee" strokeWidth="1.500" fill="none" />
        <circle cx="16" cy="9.500" r="8" fill="#f6901e" />
        <path d="M8.500 8L12 2.500h8L23.500 8" stroke="#ffc14f" strokeWidth="2" fill="none" strokeDasharray="2 1" />
        <path d="M7 14h17v3H9z" fill="#f9a93d" />
      </svg>
      <span className="ml-[6px] w-[120px] scale-x-[1.1] whitespace-nowrap text-center text-[13px]" dir="rtl">غروب الشمس الرائع</span>
    </div>
    <div className="flex-1" />
    <div className="flex">
      <div className="flex h-[40px] w-[48px] flex-col items-center border-b-2 border-[#76dcf8] bg-[#4b555b] pt-[8px]">
        <svg width="24" height="23" viewBox="0 0 24 23">
          <path d="M1 2l20-2v20L1 22z" fill="#e9f3e4" stroke="#7cab6f" />
          <path d="M5 4l9 13M14 3L4 17" stroke="#2f8c2b" strokeWidth="4" />
          <path d="M15 4h5M16 8h5" stroke="#53a247" strokeWidth="2" />
          <path d="M9 16l14-4-1 8-8 2z" fill="#f6faf4" stroke="#6da264" strokeWidth=".8" />
          <path d="M12 18l9-2M13 20l8-2" stroke="#76a870" />
        </svg>
      </div>
      <div className="flex w-[50px] flex-col items-center bg-[#222a2e] pt-[9px]">
        <svg width="24" height="22" viewBox="0 0 24 22">
          <path d="M1 1h9l2 3h11v17H1z" fill="#f4bd3d" />
          <path d="M1 7h22v13H1z" fill="#ffd766" />
          <path d="M5 21v-8q0-2 2-2h10q2 0 2 2v8h-4v-5H9v5z" fill="#3f86d8" />
        </svg>
        <div className="mt-[7px] flex"><div className="h-[2px] w-[8px] bg-[#6c93d9]" /><div className="ml-px h-[2px] w-[31px] bg-[#76dcf8]" /></div>
      </div>
      <div className="flex w-[49px] items-center justify-center">
        <svg width="24" height="24" viewBox="0 0 24 24">
          <path d="M8 2l15 4v12L8 13z" fill="#42a9ee" stroke="#9fb3bf" />
          <path d="M1 18l9-3 7 3-3 4-7-1z" fill="#d6dadd" stroke="#8d969b" strokeWidth=".8" />
        </svg>
      </div>
      <div className="flex w-[48px] items-center justify-center">
        <svg width="24" height="24" viewBox="0 0 24 24">
          <path d="M2 1h19v13l-19 1z" fill="#113f9f" stroke="#cfd6db" strokeWidth="1.500" />
          <path d="M11 2h9v11h-5z" fill="#6fabec" />
          <path d="M3 19l7-3 8 2-2 4-10-1z" fill="#bfc6cb" />
          <circle cx="17" cy="18" r="5.500" fill="#dfe4e2" stroke="#a4acaf" strokeWidth=".7" />
          <path d="M14 17l2.500 2-1.500 2M20 15l-2.500 2 2.500 2" stroke="#3d9430" strokeWidth="1.300" fill="none" />
        </svg>
      </div>
      <div className="flex w-[50px] flex-col items-center pt-[8px]">
        <Chrome />
        <div className="mt-[6px] h-[2px] w-[40px] bg-[#76dcf8]" />
      </div>
      <svg width="146" height="40" viewBox="0 0 146 40" fill="none" stroke="#fff" strokeWidth="1.200">
        <path d="M23.500 15.500h9v9h-9zM22 12.500h14.500M22 27.500h14.500M18.500 12v3M18.500 20v8" />
        <path d="M17 16h3v3h-3z" fill="#fff" stroke="none" />
        <circle cx="75.500" cy="18" r="5.500" />
        <path d="M71.500 22L66 27.500" />
        <path d="M114 14l7-1v6h-7zM122 12.800l8-1V19h-8zM114 20h7v6l-7-1zM122 20h8v7.200l-8-1z" fill="#fff" stroke="none" />
      </svg>
    </div>
  </div>
)

const Watermark = () => (
  <div className="pointer-events-none absolute left-[600px] top-[668px] flex h-[90px] w-[166px] flex-col items-center text-[#8b8f92]">
    <span className="h-[57px] origin-center scale-x-[1.08] whitespace-nowrap text-[48px] font-bold leading-[62px] opacity-25" dir="rtl">مستقل</span>
    <span className="font-['Liberation_Sans',Arial,sans-serif] text-[26.600px] font-bold leading-[26px] opacity-80">mostaql.com</span>
  </div>
)

const App = () => {
  return (
    <div className="relative h-[768px] w-[1366px] overflow-hidden bg-white font-['DejaVu_Sans_Condensed','DejaVu_Sans',sans-serif]">
      <TitleBar />
      <TabRow />
      <Ribbon />
      <FormulaBar />
      <div className="h-[4px] border-b border-[#85898f] bg-[#e6e9f0]" />
      <div className="flex h-[486px]">
        <Sheet />
        <VScroll />
      </div>
      <SheetTabs />
      <StatusBar />
      <Taskbar />
      <Watermark />
    </div>
  )
}

export default App
